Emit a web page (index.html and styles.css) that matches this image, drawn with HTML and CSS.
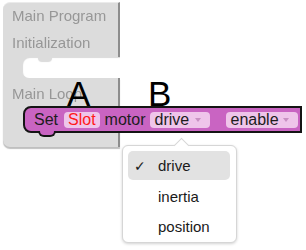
FILE: index.html
```html
<!DOCTYPE html>
<html>
<head>
<meta charset="utf-8">
<link rel="stylesheet" href="styles.css">
</head>
<body>
<div class="canvas">
  <div class="cblock">
    <div class="ctop">
      <div class="clabel">Main Program</div>
      <div class="clabel">Initialization</div>
    </div>
    <div class="cslot">
      <div class="arm"></div>
      <div class="mouth"><span class="notch"></span></div>
    </div>
    <div class="cbottom">
      <div class="clabel">Main Loop</div>
    </div>
  </div>

  <div class="mark mark-a">A</div>
  <div class="mark mark-b">B</div>

  <div class="block">
    <span class="word w-set">Set</span>
    <span class="pill pill-slot">Slot</span>
    <span class="word w-motor">motor</span>
    <span class="pill pill-drive">drive<i class="tri"></i></span>
    <span class="pill pill-enable">enable<i class="tri"></i></span>
    <span class="tab"></span>
  </div>

  <div class="menu">
    <span class="menu-arrow"></span>
    <div class="item selected"><span class="check">✓</span><span>drive</span></div>
    <div class="item"><span class="check"></span><span>inertia</span></div>
    <div class="item"><span class="check"></span><span>position</span></div>
  </div>
</div>
</body>
</html>
```

FILE: styles.css
```css
html, body {
  margin: 0;
  padding: 0;
  background: #ffffff;
}
body {
  width: 306px;
  height: 250px;
  overflow: hidden;
  font-family: "Liberation Sans", Arial, sans-serif;
}
.canvas {
  position: relative;
  width: 306px;
  height: 250px;
}

/* grey C-block */
.cblock {
  position: absolute;
  left: 3px;
  top: 2px;
  width: 117px;
  display: flex;
  flex-direction: column;
}
.ctop {
  height: 55px;
  box-sizing: border-box;
  background: #dcdcdc;
  border-radius: 7px 0 0 0;
  border-right: 2px solid #8d8d8d;
  border-top: 1px solid #ebebeb;
  padding: 4px 0 0 9px;
  display: flex;
  flex-direction: column;
  gap: 10px;
}
.clabel {
  font-size: 15px;
  line-height: 17px;
  color: #979797;
  filter: blur(0.5px);
  white-space: nowrap;
}
.cslot {
  height: 21px;
  display: flex;
  background: #dcdcdc;
}
.arm {
  width: 19px;
}
.mouth {
  flex: 1;
  position: relative;
  background: #ffffff;
  border-radius: 7px 0 0 7px;
  box-shadow: inset 1px 1px 1px rgba(0,0,0,0.15);
}
.notch {
  position: absolute;
  left: 16px;
  top: 0;
  width: 14px;
  height: 4px;
  background: #dcdcdc;
  border-radius: 0 0 7px 7px;
  box-shadow: 0 1px 1px rgba(0,0,0,0.15);
}
.cbottom {
  height: 69px;
  box-sizing: border-box;
  background: #dcdcdc;
  border-radius: 0 0 0 7px;
  border-right: 2px solid #8d8d8d;
  box-shadow: 0 2px 1px rgba(0,0,0,0.25);
  padding: 7px 0 0 9px;
}

/* annotation letters */
.mark {
  position: absolute;
  font-size: 35px;
  line-height: 35px;
  color: #000000;
}
.mark-a { left: 67px; top: 76px; }
.mark-b { left: 148px; top: 76px; }

/* purple block */
.block {
  position: absolute;
  left: 23px;
  top: 106px;
  width: 279px;
  height: 27px;
  box-sizing: border-box;
  background: #c964c2;
  border: 2px solid #141414;
  border-radius: 8px 0 0 8px;
  display: flex;
  align-items: center;
  font-size: 16px;
  line-height: 16px;
  color: #1d1d1d;
}
.tab {
  position: absolute;
  left: 13px;
  bottom: -6px;
  width: 14px;
  height: 4px;
  background: #c964c2;
  border: 2px solid #141414;
  border-top: none;
  border-radius: 0 0 7px 7px;
}
.word { white-space: nowrap; }
.w-set { margin-left: 9px; }
.pill {
  display: flex;
  align-items: center;
  height: 16px;
  background: #efc5ea;
  border-radius: 4px;
  padding: 0 5px;
  white-space: nowrap;
}
.pill-slot {
  margin-left: 6px;
  color: #ff1a1a;
  padding: 0 4px;
}
.w-motor { margin-left: 5px; }
.pill-drive {
  margin-left: 4px;
  width: 60px;
  box-sizing: border-box;
}
.pill-enable {
  margin-left: 16px;
  width: 72px;
  box-sizing: border-box;
}
.tri {
  width: 0;
  height: 0;
  margin-left: auto;
  margin-right: 4px;
  border-left: 3px solid transparent;
  border-right: 3px solid transparent;
  border-top: 4px solid #c890c2;
}

/* dropdown menu */
.menu {
  position: absolute;
  left: 122px;
  top: 145px;
  width: 115px;
  height: 98px;
  box-sizing: border-box;
  background: #ffffff;
  border: 1px solid #d6d6d6;
  border-radius: 6px;
  box-shadow: 0 1px 3px rgba(0,0,0,0.18);
  padding: 5px 6px 0 5px;
  display: flex;
  flex-direction: column;
  font-size: 15px;
  color: #1a1a1a;
}
.menu-arrow {
  position: absolute;
  left: 53px;
  top: -6px;
  width: 10px;
  height: 10px;
  background: #ffffff;
  border-left: 1px solid #d6d6d6;
  border-top: 1px solid #d6d6d6;
  transform: rotate(45deg);
}
.item {
  position: relative;
  height: 30px;
  display: flex;
  align-items: center;
  border-radius: 5px;
  padding-left: 6px;
}
.item.selected {
  height: 29px;
  margin-bottom: 1px;
  background: #e2e2e2;
}
.check {
  width: 24px;
  font-family: "DejaVu Sans", sans-serif;
  font-size: 14px;
}
```
